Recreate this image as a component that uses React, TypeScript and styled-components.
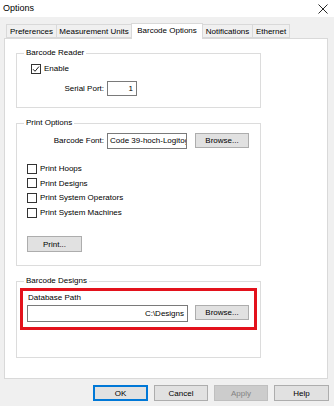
import styled, { createGlobalStyle } from "styled-components";

const GlobalStyle = createGlobalStyle`
  html, body {
    margin: 0;
    padding: 0;
    background: #f0f0f0;
  }
  body {
    font-family: "Liberation Sans", Arial, sans-serif;
    font-size: 8px;
    color: #000;
  }
`;

const tabs = [
  { label: "Preferences", width: 51 },
  { label: "Measurement Units", width: 76 },
  { label: "Barcode Options", width: 72, active: true },
  { label: "Notifications", width: 51 },
  { label: "Ethernet", width: 38 },
];

const checks = [
  "Print Hoops",
  "Print Designs",
  "Print System Operators",
  "Print System Machines",
];

const CheckMark = () => (
  <svg width="8" height="8" viewBox="0 0 8 8">
    <path d="M1 4.2 L3 6.3 L7 1.5" fill="none" stroke="#222" strokeWidth="1" />
  </svg>
);

const App = () => {
  return (
    <Window>
      <GlobalStyle />
      <TitleBar>
        <Title>Options</Title>
        <svg width="10" height="10" viewBox="0 0 10 10">
          <path d="M0.5 0.5 L9.5 9.5 M9.5 0.5 L0.5 9.5" stroke="#111" strokeWidth="0.9" />
        </svg>
      </TitleBar>

      <TabStrip>
        {tabs.map((t) => (
          <Tab key={t.label} width={t.width} active={t.active}>
            {t.label}
          </Tab>
        ))}
      </TabStrip>

      <Panel>
        <Group height={55}>
          <Legend>Barcode Reader</Legend>
          <CheckRow indent={4}>
            <Box>
              <CheckMark />
            </Box>
            Enable
          </CheckRow>
          <FieldRow top={7}>
            <FieldLabel>Serial Port:</FieldLabel>
            <Input width={30} height={15} align="right">
              1
            </Input>
          </FieldRow>
        </Group>

        <Group height={143}>
          <Legend>Print Options</Legend>
          <FieldRow top={0}>
            <FieldLabel>Barcode Font:</FieldLabel>
            <Input width={80} height={16}>
              Code 39-hoch-Logitogo
            </Input>
            <Button width={54} gap={8}>
              Browse...
            </Button>
          </FieldRow>
          <CheckList>
            {checks.map((c) => (
              <CheckRow key={c} indent={0}>
                <Box />
                {c}
              </CheckRow>
            ))}
          </CheckList>
          <Button width={55} gap={0} tall>
            Print...
          </Button>
        </Group>

        <Group height={77} tight>
          <Legend>Barcode Designs</Legend>
          <Highlight>
            <PathLabel>Database Path</PathLabel>
            <FieldRow top={1}>
              <Input width={161} height={17} align="right">
                C:\Designs
              </Input>
              <Button width={54} gap={7}>
                Browse...
              </Button>
            </FieldRow>
          </Highlight>
        </Group>
      </Panel>

      <Footer>
        <Button width={55} gap={0} tall primary>
          OK
        </Button>
        <Button width={54} gap={0} tall>
          Cancel
        </Button>
        <Button width={54} gap={0} tall disabled>
          Apply
        </Button>
        <Button width={55} gap={0} tall>
          Help
        </Button>
      </Footer>
    </Window>
  );
};

export default App;

const Window = styled.div`
  width: 334px;
  height: 406px;
  display: flex;
  flex-direction: column;
  background: #f0f0f0;
  overflow: hidden;
`;

const TitleBar = styled.div`
  height: 17px;
  background: #fff;
  display: flex;
  align-items: center;
  justify-content: space-between;
  padding: 0 6px 0 3px;
`;

const Title = styled.div`
  font-size: 9px;
  padding-bottom: 1px;
`;

const TabStrip = styled.div`
  height: 16px;
  margin: 6px 0 -1px 7px;
  display: flex;
  align-items: flex-end;
  position: relative;
  z-index: 1;
`;

const Tab = styled.div<{ width: number; active?: boolean }>`
  width: ${({ width }) => width}px;
  height: ${({ active }) => (active ? 16 : 14)}px;
  box-sizing: border-box;
  margin-left: -1px;
  margin-bottom: ${({ active }) => (active ? 0 : 1)}px;
  border: 1px solid #d9d9d9;
  border-bottom: ${({ active }) => (active ? "none" : "1px solid #d9d9d9")};
  background: ${({ active }) => (active ? "#fff" : "#f0f0f0")};
  display: flex;
  align-items: center;
  justify-content: center;
  white-space: nowrap;
  padding-bottom: ${({ active }) => (active ? 2 : 0)}px;
`;

const Panel = styled.div`
  margin: 0 6px 0 4px;
  height: 341px;
  box-sizing: border-box;
  border: 1px solid #d9d9d9;
  background: #fff;
  display: flex;
  flex-direction: column;
  gap: 15px;
  padding: 14px 0 0 11px;
`;

const Group = styled.div<{ height: number; tight?: boolean }>`
  position: relative;
  width: 245px;
  height: ${({ height }) => height}px;
  box-sizing: border-box;
  border: 1px solid #dcdcdc;
  padding: ${({ tight }) => (tight ? "6px 2px 0 3px" : "9px 0 0 10px")};
  display: flex;
  flex-direction: column;
  align-items: flex-start;
`;

const Legend = styled.div`
  position: absolute;
  top: -6px;
  left: 7px;
  padding: 0 2px;
  background: #fff;
  line-height: 10px;
  white-space: nowrap;
`;

const CheckRow = styled.div<{ indent: number }>`
  display: flex;
  align-items: center;
  gap: 3px;
  height: 11px;
  margin-left: ${({ indent }) => indent}px;
  white-space: nowrap;
`;

const Box = styled.span`
  width: 10px;
  height: 10px;
  box-sizing: border-box;
  border: 1px solid #333;
  display: flex;
  align-items: center;
  justify-content: center;
  background: #fff;
`;

const CheckList = styled.div`
  margin-top: 14px;
  display: flex;
  flex-direction: column;
  gap: 3.7px;
  margin-bottom: 18px;
`;

const FieldRow = styled.div<{ top: number }>`
  display: flex;
  align-items: flex-start;
  margin-top: ${({ top }) => top}px;
`;

const FieldLabel = styled.div`
  width: 80px;
  box-sizing: border-box;
  padding-right: 3px;
  text-align: right;
  line-height: 15px;
  white-space: nowrap;
`;

const Input = styled.div<{ width: number; height: number; align?: string }>`
  width: ${({ width }) => width}px;
  height: ${({ height }) => height}px;
  box-sizing: border-box;
  border: 1px solid #7a7a7a;
  background: #fff;
  padding: 0 3px 0 2px;
  line-height: ${({ height }) => height - 2}px;
  text-align: ${({ align }) => align || "left"};
  white-space: nowrap;
  overflow: hidden;
`;

const Button = styled.div<{
  width: number;
  gap: number;
  tall?: boolean;
  primary?: boolean;
  disabled?: boolean;
}>`
  width: ${({ width }) => width}px;
  height: ${({ tall }) => (tall ? 16 : 15)}px;
  margin-left: ${({ gap }) => gap}px;
  box-sizing: border-box;
  border: 1px solid ${({ primary, disabled }) =>
    primary ? "#0078d7" : disabled ? "#bfbfbf" : "#adadad"};
  box-shadow: ${({ primary }) => (primary ? "inset 0 0 0 1px #0078d7" : "none")};
  background: ${({ disabled }) => (disabled ? "#cccccc" : "#e1e1e1")};
  color: ${({ disabled }) => (disabled ? "#838383" : "#000")};
  display: flex;
  align-items: center;
  justify-content: center;
  white-space: nowrap;
`;

const Highlight = styled.div`
  width: 237px;
  height: 42px;
  box-sizing: border-box;
  border: 3px solid #e3121c;
  padding: 1px 0 0 4px;
`;

const PathLabel = styled.div`
  line-height: 12px;
  padding-left: 1px;
`;

const Footer = styled.div`
  display: flex;
  justify-content: flex-end;
  gap: 6px;
  padding: 6px 5px 0 0;
`;
